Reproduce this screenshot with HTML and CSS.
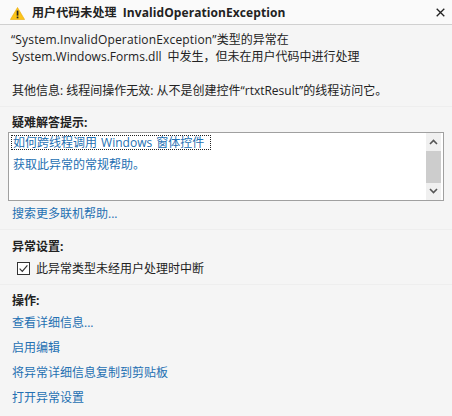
FILE: index.html
```html
<!DOCTYPE html>
<html lang="zh-CN">
<head>
<meta charset="utf-8">
<title>用户代码未处理 InvalidOperationException</title>
<link rel="stylesheet" href="styles.css">
</head>
<body>
<div class="dialog">
  <header class="title-bar">
    <svg class="warn" width="15" height="13" viewBox="0 0 15 13"><path d="M7.5 .5 14.6 12.5H.4Z" fill="#fcc419" stroke="#e8a90c" stroke-width=".6" stroke-linejoin="round"/><rect x="6.7" y="3.6" width="1.7" height="5" fill="#222"/><rect x="6.7" y="9.6" width="1.7" height="1.7" fill="#222"/></svg>
    <h1 class="title">用户代码未处理 InvalidOperationException</h1>
    <svg class="close" width="9" height="9" viewBox="0 0 9 9"><path d="M.7.7 8.3 8.3M8.3.7.7 8.3" stroke="#222" stroke-width="1.3" fill="none"/></svg>
  </header>
  <section class="message">
    <p><span class="latin">“System.InvalidOperationException”</span>类型的异常在<br><span class="spaced">System.Windows.Forms.dll 中发生</span>，但未在用户代码中进行处理</p>
    <p class="detail">其他信息: 线程间操作无效: 从不是创建控件“rtxtResult”的线程访问它。</p>
  </section>
  <section class="tips">
    <h2 class="label">疑难解答提示:</h2>
    <div class="listbox">
      <div class="list-items">
        <a class="item selected">如何跨线程调用 Windows 窗体控件</a>
        <a class="item">获取此异常的常规帮助。</a>
      </div>
      <div class="scrollbar">
        <svg class="arrow" width="9" height="6" viewBox="0 0 9 6"><path d="M1 5 4.5 1.5 8 5" stroke="#555" stroke-width="1.6" fill="none"/></svg>
        <div class="thumb"></div>
        <svg class="arrow" width="9" height="6" viewBox="0 0 9 6"><path d="M1 1 4.5 4.5 8 1" stroke="#555" stroke-width="1.6" fill="none"/></svg>
      </div>
    </div>
    <a class="link more">搜索更多联机帮助...</a>
  </section>
  <section class="settings">
    <h2 class="label">异常设置:</h2>
    <label class="check">
      <svg class="box" width="13" height="13" viewBox="0 0 13 13"><rect x=".5" y=".5" width="12" height="12" fill="#fff" stroke="#333"/><path d="M2.6 6.6 5.3 9.4 10.4 3.4" stroke="#333" stroke-width="1.2" fill="none"/></svg>
      <span>此异常类型未经用户处理时中断</span>
    </label>
  </section>
  <section class="actions">
    <h2 class="label">操作:</h2>
    <a class="link">查看详细信息...</a>
    <a class="link">启用编辑</a>
    <a class="link">将异常详细信息复制到剪贴板</a>
    <a class="link">打开异常设置</a>
  </section>
</div>
</body>
</html>
```
FILE: styles.css
```css
* { box-sizing: border-box; }
html, body { margin: 0; padding: 0; }
body {
  width: 452px;
  height: 416px;
  overflow: hidden;
  background: #f5f5f5;
  color: #222;
  font: 12px/17px "Open Sans", "Noto Sans CJK SC", sans-serif;
}
.dialog { display: flex; flex-direction: column; height: 416px; }
.title-bar {
  height: 25px;
  display: flex;
  align-items: center;
  padding: 0 7px 0 10px;
  background: #fafafa;
  border-bottom: 1px solid #d0d0d0;
}
.warn { flex: none; margin: 2px 7px 0 0; }
.title {
  flex: 1;
  margin: 0;
  padding-top: 1px;
  font-size: 12px;
  font-weight: 700;
  line-height: 22px;
  word-spacing: 3px;
  letter-spacing: .08px;
}
.close { flex: none; }
.message {
  height: 82px;
  padding: 6px 12px 0 11px;
  border-bottom: 1px solid #eeeeee;
}
.message p { margin: 0; }
.message .detail { margin-top: 17px; padding-left: 1px; }
.latin { letter-spacing: .16px; }
.spaced { word-spacing: 3px; padding-left: 1px; }
.tips {
  height: 123px;
  padding: 7px 8px 0 8px;
  border-bottom: 1px solid #eeeeee;
}
.label {
  margin: 0 0 0 4px;
  font-size: 12px;
  font-weight: 700;
  line-height: 17px;
}
.listbox {
  display: flex;
  height: 69px;
  margin-top: 1px;
  padding-right: 2px;
  background: #fff;
  border: 1px solid #a0a0a0;
}
.list-items { flex: 1; padding: 2px 2px 0; }
.item { display: block; color: #2470b2; height: 22px; line-height: 17px; padding-left: 2px; }
.item.selected { outline: 1px dotted #222; outline-offset: -1px; width: 200px; height: 15px; line-height: 15px; margin-bottom: 6px; word-spacing: 1px; }
.scrollbar {
  width: 15px;
  background: #f0f0f0;
  display: flex;
  flex-direction: column;
  align-items: center;
  justify-content: space-between;
  padding: 6px 0 6px;
}
.thumb { width: 15px; height: 32px; background: #cdcdcd; }
.link { display: block; color: #2470b2; margin-left: 4px; }
.more { margin-top: 4px; }
.settings {
  height: 55px;
  padding: 8px 8px 0;
  border-bottom: 1px solid #eeeeee;
}
.check { display: flex; align-items: center; margin: 5px 0 0 9px; }
.box { flex: none; margin-right: 6px; }
.actions {
  display: flex;
  flex-direction: column;
  padding: 7px 8px 0;
  gap: 8px;
}
.actions .label { margin-bottom: -3px; }
```
